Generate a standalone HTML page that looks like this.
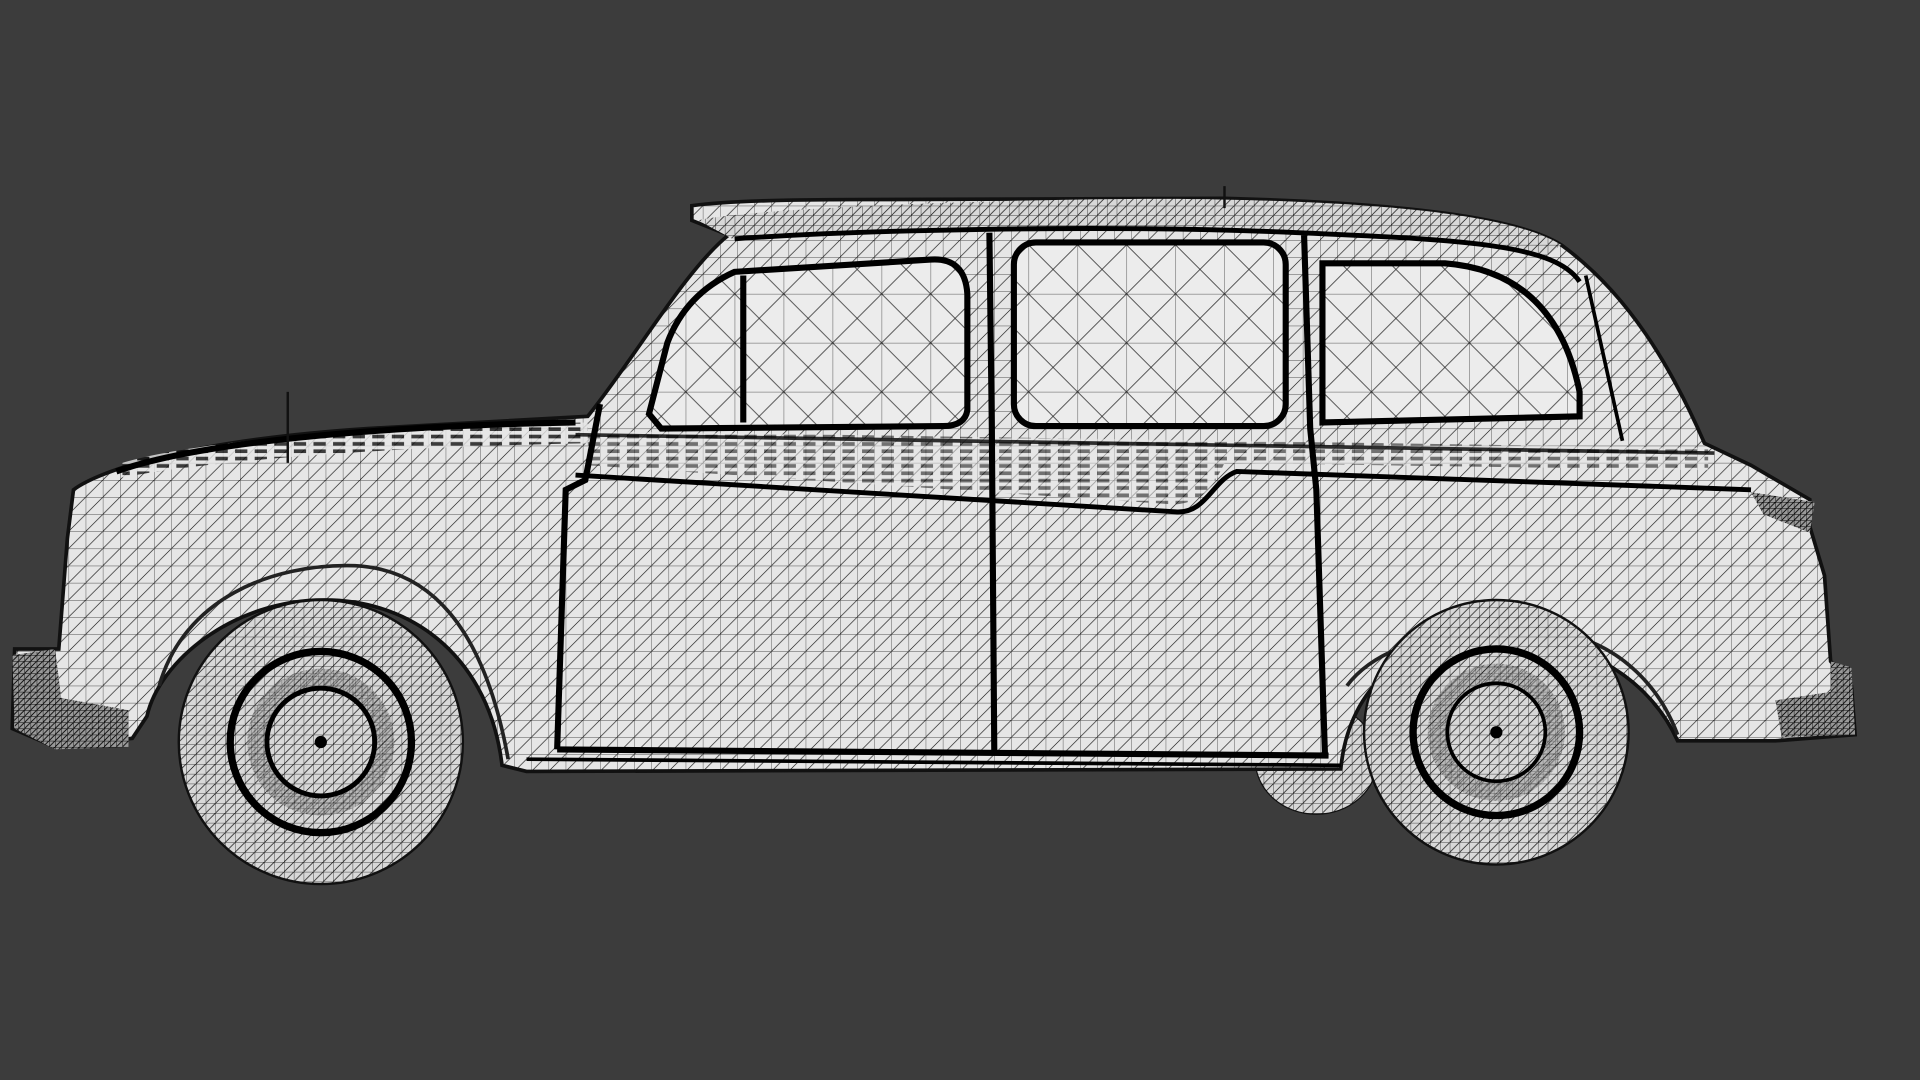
<!DOCTYPE html>
<html><head><meta charset="utf-8"><style>
html,body{margin:0;padding:0;background:#3c3c3c;width:1920px;height:1080px;overflow:hidden}
svg{display:block}
</style></head><body>
<svg width="1920" height="1080" viewBox="0 0 1568 882" preserveAspectRatio="none">
<defs>
<pattern id="m" width="14" height="14" patternUnits="userSpaceOnUse">
<rect width="14" height="14" fill="#e6e6e6"/>
<path d="M0 0H14M0 0V14M0 14L14 0" stroke="#1a1a1a" stroke-width="0.55" fill="none"/>
</pattern>
<pattern id="w" width="40" height="40" patternUnits="userSpaceOnUse">
<rect width="40" height="40" fill="#ececec"/>
<path d="M0 0H40M0 0V40M0 0L40 40M40 0L0 40" stroke="#222" stroke-width="0.6" fill="none"/>
</pattern>
<pattern id="t" width="8" height="8" patternUnits="userSpaceOnUse">
<rect width="8" height="8" fill="#d8d8d8"/>
<path d="M0 0H8M0 0V8M0 8L8 0" stroke="#111" stroke-width="0.6" fill="none"/>
</pattern>
<pattern id="h" width="5" height="5" patternUnits="userSpaceOnUse">
<rect width="5" height="5" fill="#999"/>
<path d="M0 0H5M0 0V5M0 5L5 0" stroke="#000" stroke-width="0.7" fill="none"/>
</pattern>
<pattern id="d" width="16" height="6" patternUnits="userSpaceOnUse">
<rect width="16" height="6" fill="#e6e6e6"/>
<rect x="0" y="1" width="10" height="3" fill="#111"/>
</pattern>
</defs>
<rect width="1568" height="882" fill="#3c3c3c"/>
<ellipse cx="1075" cy="620" rx="50" ry="45" fill="url(#t)" stroke="#111"/>
<path d="M60,400 C80,385 150,360 300,350 L480,340 C520,290 560,220 595,192 L565,180 L565,168 Q600,163 700,163 L1000,162 C1150,166 1240,178 1275,200 C1330,240 1365,300 1392,362 L1430,380 L1478,408 L1478,430 L1490,470 L1495,540 L1512,560 L1515,600 L1450,605 L1370,605 C1350,560 1300,520 1220,520 C1140,520 1100,570 1095,628 L430,630 L410,625 C400,540 340,490 265,490 C190,490 130,540 120,585 L108,603 L45,610 L10,595 L12,530 L48,530 L55,440 Z" fill="url(#m)" stroke="#111" stroke-width="3"/>
<path d="M100,378 C160,360 300,348 480,345 L480,362 C300,365 160,378 100,390 Z" fill="url(#d)" opacity="0.8"/>
<path d="M480,352 L1395,366 L1395,384 L1000,378 C990,400 980,410 960,412 L480,380 Z" fill="url(#d)" opacity="0.55"/>
<path d="M95,385 C160,362 300,348 470,345" stroke="#000" stroke-width="5" fill="none"/>
<path d="M470,388 L960,418 C985,420 990,392 1010,385 L1430,400" stroke="#000" stroke-width="4" fill="none"/>
<path d="M470,355 L1400,370" stroke="#000" stroke-width="3" fill="none" opacity="0.8"/>
<path d="M570,180 C620,168 900,160 1000,163 C1150,166 1240,178 1275,200 L1262,210 C1200,192 1000,186 800,186 L600,196 Z" fill="url(#t)"/>
<path d="M600,195 C700,188 900,183 1060,190 C1200,196 1270,200 1290,230" stroke="#000" stroke-width="4" fill="none"/>
<path d="M530,338 L545,280 Q560,240 600,222 L760,212 Q788,210 790,240 L790,335 Q788,348 770,348 L540,350 Z" fill="url(#w)" stroke="#000" stroke-width="5"/>
<rect x="828" y="198" width="222" height="150" rx="18" fill="url(#w)" stroke="#000" stroke-width="5"/>
<path d="M1080,215 L1180,215 Q1270,222 1290,320 L1290,340 L1080,345 Z" fill="url(#w)" stroke="#000" stroke-width="5"/>
<path d="M607,225 L607,345" stroke="#000" stroke-width="5"/>
<path d="M808,190 L810,350 L812,615" stroke="#000" stroke-width="5" fill="none"/>
<path d="M1065,192 L1070,350 L1075,400 L1082,615" stroke="#000" stroke-width="5" fill="none"/>
<path d="M490,330 L478,392 L462,400 L455,612" stroke="#000" stroke-width="5" fill="none"/>
<path d="M455,612 L1085,617" stroke="#000" stroke-width="5"/>
<path d="M430,620 L1095,625" stroke="#000" stroke-width="3"/>
<path d="M1295,225 L1325,360" stroke="#000" stroke-width="3"/>
<path d="M130,560 C150,490 220,460 290,462 C350,465 395,510 415,620" stroke="#222" stroke-width="3" fill="none"/>
<path d="M1100,560 C1130,520 1200,512 1260,515 C1320,520 1355,560 1370,600" stroke="#222" stroke-width="3" fill="none"/>
<path d="M10,535 L45,530 L50,570 L105,580 L105,610 L45,612 L12,595 Z" fill="url(#h)"/>
<path d="M1495,540 L1512,545 L1515,600 L1455,602 L1450,572 L1495,565 Z" fill="url(#h)"/>
<path d="M1430,402 L1482,410 L1478,435 L1440,420 Z" fill="url(#h)"/>
<path d="M235,320 L235,378 M1000,152 L1000,170" stroke="#111" stroke-width="2"/>
<g>
<circle cx="262" cy="606" r="116" fill="url(#t)" stroke="#111" stroke-width="2"/>
<circle cx="262" cy="606" r="74" fill="none" stroke="#000" stroke-width="6"/>
<circle cx="262" cy="606" r="60" fill="url(#h)" opacity="0.5"/>
<circle cx="262" cy="606" r="44" fill="url(#t)" stroke="#000" stroke-width="4"/>
<circle cx="262" cy="606" r="5" fill="#000"/>
</g>
<g>
<circle cx="1222" cy="598" r="108" fill="url(#t)" stroke="#111" stroke-width="2"/>
<circle cx="1222" cy="598" r="68" fill="none" stroke="#000" stroke-width="6"/>
<circle cx="1222" cy="598" r="56" fill="url(#h)" opacity="0.5"/>
<circle cx="1222" cy="598" r="40" fill="url(#t)" stroke="#000" stroke-width="3"/>
<circle cx="1222" cy="598" r="5" fill="#000"/>
</g>
</svg>
</body></html>
